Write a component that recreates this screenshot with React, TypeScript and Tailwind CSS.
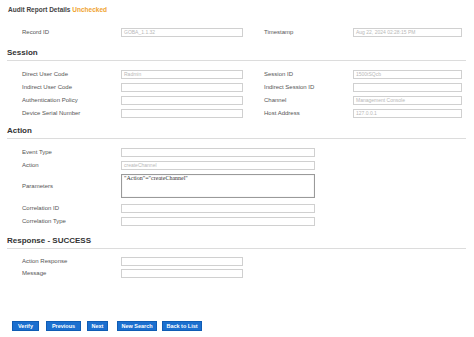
import React from 'react';

type Field = { label: string; value?: string };

function Box({ value, w }: { value?: string; w: string }) {
  return (
    <div
      className={`${w} h-[9px] border border-[#d0d0d0] bg-white px-[2px] text-[5px] leading-[7px] text-[#b8b8b8] overflow-hidden whitespace-nowrap`}
    >
      {value}
    </div>
  );
}

function Label({ text, w }: { text: string; w: string }) {
  return <div className={`${w} shrink-0 text-[6px] leading-[9px] text-[#555]`}>{text}</div>;
}

function PairRow({ left, right }: { left: Field; right: Field }) {
  return (
    <div className="flex items-center pl-[15px]">
      <Label text={left.label} w="w-[99px]" />
      <Box value={left.value} w="w-[122px]" />
      <div className="w-[21px] shrink-0" />
      <Label text={right.label} w="w-[89px]" />
      <Box value={right.value} w="w-[109px]" />
    </div>
  );
}

function SingleRow({ f, w }: { f: Field; w: string }) {
  return (
    <div className="flex items-center pl-[15px]">
      <Label text={f.label} w="w-[99px]" />
      <Box value={f.value} w={w} />
    </div>
  );
}

function Heading({ text, mt }: { text: string; mt: string }) {
  return (
    <div className={`${mt} border-b border-[#dcdcdc] pb-[2px]`}>
      <div className="text-[8px] leading-[10px] font-bold text-[#333]">{text}</div>
    </div>
  );
}

const session: [Field, Field][] = [
  [{ label: 'Direct User Code', value: 'Radmin' }, { label: 'Session ID', value: '1500tSQcb' }],
  [{ label: 'Indirect User Code' }, { label: 'Indirect Session ID' }],
  [{ label: 'Authentication Policy' }, { label: 'Channel', value: 'Management Console' }],
  [{ label: 'Device Serial Number' }, { label: 'Host Address', value: '127.0.0.1' }],
];

const buttons = [
  { text: 'Verify', cls: 'ml-[12px] w-[27px]' },
  { text: 'Previous', cls: 'ml-[7px] w-[35px]' },
  { text: 'Next', cls: 'ml-[6px] w-[21px]' },
  { text: 'New Search', cls: 'ml-[9px] w-[40px]' },
  { text: 'Back to List', cls: 'ml-[5px] w-[40px]' },
];

export default function App() {
  return (
    <div className="w-[474px] h-[337px] bg-white px-[7px] pr-[8px] font-['Liberation_Sans',Arial,sans-serif]">
      <div className="pt-[6px] pl-[1px] text-[6.5px] leading-[8px] font-bold text-[#444]">
        Audit Report Details <span className="text-[#f0a330]">Unchecked</span>
      </div>

      <div className="mt-[14px]">
        <PairRow left={{ label: 'Record ID', value: 'GOBA_1.1.32' }} right={{ label: 'Timestamp', value: 'Aug 22, 2024 02:28:15 PM' }} />
      </div>

      <Heading text="Session" mt="mt-[11px]" />
      <div className="mt-[9px] flex flex-col gap-[4px]">
        {session.map(([l, r]) => (
          <PairRow key={l.label} left={l} right={r} />
        ))}
      </div>

      <Heading text="Action" mt="mt-[8px]" />
      <div className="mt-[9px] flex flex-col gap-[4px]">
        <SingleRow f={{ label: 'Event Type' }} w="w-[194px]" />
        <SingleRow f={{ label: 'Action', value: 'createChannel' }} w="w-[194px]" />
        <div className="flex items-center pl-[15px] mb-[2px]">
          <Label text="Parameters" w="w-[99px]" />
          <div className="w-[194px] h-[24px] border border-[#9a9a9a] shadow-[inset_0_0_1px_#bbb] px-[2px] font-['Liberation_Serif',serif] text-[6px] leading-[7px] text-[#333]">
            "Action"="createChannel"
          </div>
        </div>
        <SingleRow f={{ label: 'Correlation ID' }} w="w-[194px]" />
        <SingleRow f={{ label: 'Correlation Type' }} w="w-[194px]" />
      </div>

      <Heading text="Response - SUCCESS" mt="mt-[10px]" />
      <div className="mt-[8px] flex flex-col gap-[3px]">
        <SingleRow f={{ label: 'Action Response' }} w="w-[122px]" />
        <SingleRow f={{ label: 'Message' }} w="w-[122px]" />
      </div>

      <div className="mt-[43px] flex -ml-[7px]">
        {buttons.map((b) => (
          <button
            key={b.text}
            className={`${b.cls} h-[10px] bg-[#1b6fcf] border border-[#0f5cb4] text-white text-[5.5px] leading-[8px] font-bold text-center whitespace-nowrap`}
          >
            {b.text}
          </button>
        ))}
      </div>
    </div>
  );
}
